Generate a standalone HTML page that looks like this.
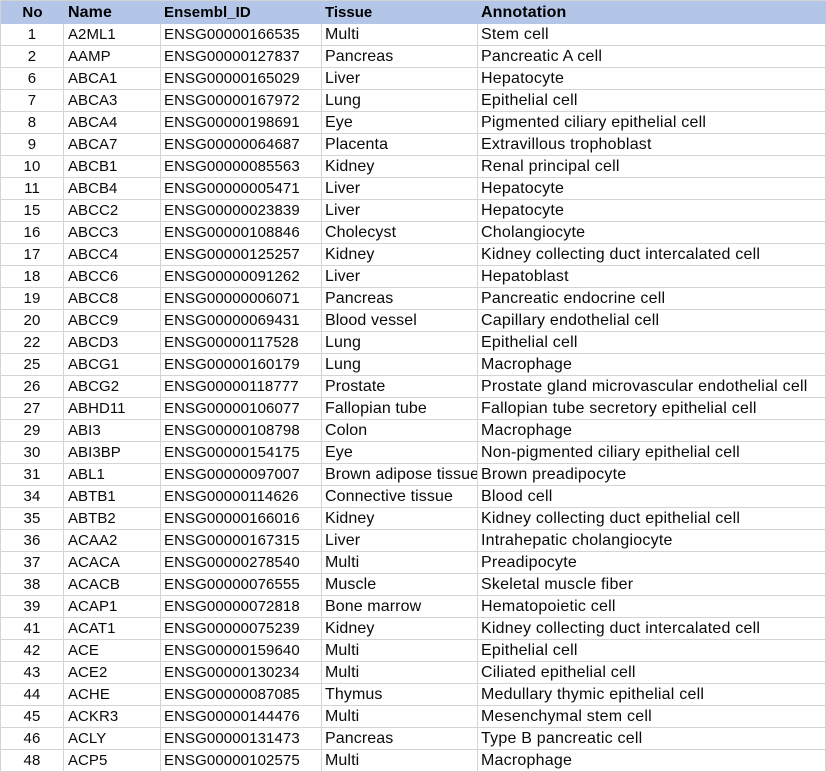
<!DOCTYPE html>
<html><head><meta charset="utf-8"><style>
html,body{margin:0;padding:0;width:826px;height:771px;overflow:hidden;background:#fff}
table{border-collapse:separate;border-spacing:0;table-layout:fixed;width:826px;font:15px/21px "Liberation Sans",sans-serif;color:#0a0a0a;position:absolute;left:0;top:0}
td,th{height:21px;padding:0 0 0 3px;white-space:nowrap;overflow:hidden;border-right:1px solid #d4d4d4;border-bottom:1px solid #d4d4d4;box-sizing:content-box;text-align:left;font-weight:400;letter-spacing:.1px}
th{background:#b4c6e7;font-weight:700;border:0;height:22px;line-height:23px;color:#000;border-top:1px solid #d4d4d4}
td:first-child,th:first-child{text-align:center;padding:0;border-left:1px solid #d4d4d4}
td:nth-child(2),th:nth-child(2){padding-left:4px;letter-spacing:.05px}
th:nth-child(2){font-size:16px;letter-spacing:.1px}
td:nth-child(4){font-size:16px;letter-spacing:.1px}
td:nth-child(5){font-size:16px;letter-spacing:.22px}
th:nth-child(5){font-size:16px}
th:nth-child(4){letter-spacing:0}
</style></head><body>
<table>
<colgroup><col style="width:64px"><col style="width:97px"><col style="width:161px"><col style="width:156px"><col style="width:348px"></colgroup>
<tr><th>No</th><th>Name</th><th>Ensembl_ID</th><th>Tissue</th><th>Annotation</th></tr>
<tr><td>1</td><td>A2ML1</td><td>ENSG00000166535</td><td>Multi</td><td>Stem cell</td></tr>
<tr><td>2</td><td>AAMP</td><td>ENSG00000127837</td><td>Pancreas</td><td>Pancreatic A cell</td></tr>
<tr><td>6</td><td>ABCA1</td><td>ENSG00000165029</td><td>Liver</td><td>Hepatocyte</td></tr>
<tr><td>7</td><td>ABCA3</td><td>ENSG00000167972</td><td>Lung</td><td>Epithelial cell</td></tr>
<tr><td>8</td><td>ABCA4</td><td>ENSG00000198691</td><td>Eye</td><td>Pigmented ciliary epithelial cell</td></tr>
<tr><td>9</td><td>ABCA7</td><td>ENSG00000064687</td><td>Placenta</td><td>Extravillous trophoblast</td></tr>
<tr><td>10</td><td>ABCB1</td><td>ENSG00000085563</td><td>Kidney</td><td>Renal principal cell</td></tr>
<tr><td>11</td><td>ABCB4</td><td>ENSG00000005471</td><td>Liver</td><td>Hepatocyte</td></tr>
<tr><td>15</td><td>ABCC2</td><td>ENSG00000023839</td><td>Liver</td><td>Hepatocyte</td></tr>
<tr><td>16</td><td>ABCC3</td><td>ENSG00000108846</td><td>Cholecyst</td><td>Cholangiocyte</td></tr>
<tr><td>17</td><td>ABCC4</td><td>ENSG00000125257</td><td>Kidney</td><td>Kidney collecting duct intercalated cell</td></tr>
<tr><td>18</td><td>ABCC6</td><td>ENSG00000091262</td><td>Liver</td><td>Hepatoblast</td></tr>
<tr><td>19</td><td>ABCC8</td><td>ENSG00000006071</td><td>Pancreas</td><td>Pancreatic endocrine cell</td></tr>
<tr><td>20</td><td>ABCC9</td><td>ENSG00000069431</td><td>Blood vessel</td><td>Capillary endothelial cell</td></tr>
<tr><td>22</td><td>ABCD3</td><td>ENSG00000117528</td><td>Lung</td><td>Epithelial cell</td></tr>
<tr><td>25</td><td>ABCG1</td><td>ENSG00000160179</td><td>Lung</td><td>Macrophage</td></tr>
<tr><td>26</td><td>ABCG2</td><td>ENSG00000118777</td><td>Prostate</td><td>Prostate gland microvascular endothelial cell</td></tr>
<tr><td>27</td><td>ABHD11</td><td>ENSG00000106077</td><td>Fallopian tube</td><td>Fallopian tube secretory epithelial cell</td></tr>
<tr><td>29</td><td>ABI3</td><td>ENSG00000108798</td><td>Colon</td><td>Macrophage</td></tr>
<tr><td>30</td><td>ABI3BP</td><td>ENSG00000154175</td><td>Eye</td><td>Non-pigmented ciliary epithelial cell</td></tr>
<tr><td>31</td><td>ABL1</td><td>ENSG00000097007</td><td>Brown adipose tissue</td><td>Brown preadipocyte</td></tr>
<tr><td>34</td><td>ABTB1</td><td>ENSG00000114626</td><td>Connective tissue</td><td>Blood cell</td></tr>
<tr><td>35</td><td>ABTB2</td><td>ENSG00000166016</td><td>Kidney</td><td>Kidney collecting duct epithelial cell</td></tr>
<tr><td>36</td><td>ACAA2</td><td>ENSG00000167315</td><td>Liver</td><td>Intrahepatic cholangiocyte</td></tr>
<tr><td>37</td><td>ACACA</td><td>ENSG00000278540</td><td>Multi</td><td>Preadipocyte</td></tr>
<tr><td>38</td><td>ACACB</td><td>ENSG00000076555</td><td>Muscle</td><td>Skeletal muscle fiber</td></tr>
<tr><td>39</td><td>ACAP1</td><td>ENSG00000072818</td><td>Bone marrow</td><td>Hematopoietic cell</td></tr>
<tr><td>41</td><td>ACAT1</td><td>ENSG00000075239</td><td>Kidney</td><td>Kidney collecting duct intercalated cell</td></tr>
<tr><td>42</td><td>ACE</td><td>ENSG00000159640</td><td>Multi</td><td>Epithelial cell</td></tr>
<tr><td>43</td><td>ACE2</td><td>ENSG00000130234</td><td>Multi</td><td>Ciliated epithelial cell</td></tr>
<tr><td>44</td><td>ACHE</td><td>ENSG00000087085</td><td>Thymus</td><td>Medullary thymic epithelial cell</td></tr>
<tr><td>45</td><td>ACKR3</td><td>ENSG00000144476</td><td>Multi</td><td>Mesenchymal stem cell</td></tr>
<tr><td>46</td><td>ACLY</td><td>ENSG00000131473</td><td>Pancreas</td><td>Type B pancreatic cell</td></tr>
<tr><td>48</td><td>ACP5</td><td>ENSG00000102575</td><td>Multi</td><td>Macrophage</td></tr>
</table>
</body></html>
